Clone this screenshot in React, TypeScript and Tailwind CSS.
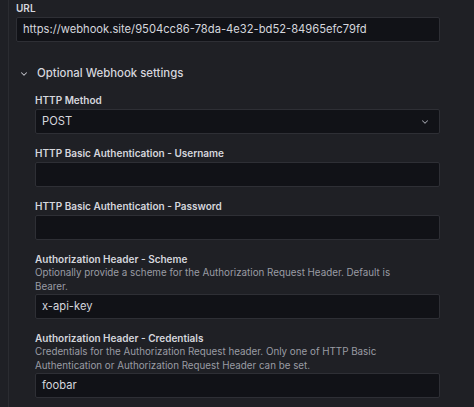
import { ChevronDown } from "lucide-react";

const font = { fontFamily: "Inter, 'Noto Sans', sans-serif" };

function Field({ label, description, value, select }: { label: string; description?: string[]; value?: string; select?: boolean }) {
  return (
    <div className="flex flex-col">
      <div className="h-[14px] leading-[14px] text-[10px] font-semibold text-[#d5d6dd] mb-[2px]">{label}</div>
      {description && (
        <div className="text-[9.8px] leading-[14px] text-[#9a9ca4] -mt-[2px]">
          {description.map((d) => (
            <div key={d}>{d}</div>
          ))}
        </div>
      )}
      <div className="h-[25px] flex items-center justify-between bg-[#111217] border border-[#2e2f35] rounded-[2px] pl-[6px] pr-[7px] text-[11.2px] text-[#d5d6dd]">
        <span>{value}</span>
        {select && <ChevronDown className="w-[10px] h-[10px] text-[#9b9da6] mr-[2px]" strokeWidth={2.5} />}
      </div>
    </div>
  );
}

export default function App() {
  return (
    <div className="w-[474px] h-[407px] bg-[#1f2025] overflow-hidden pl-[8px]" style={font}>
      <div className="h-full border-l border-[#2b2c31] pl-[7px] pt-[1px] pr-[34px]">
        <Field label="URL" value="https://webhook.site/9504cc86-78da-4e32-bd52-84965efc79fd" />
        <div className="mt-[21px] h-[22px] flex items-center gap-[8px] pl-[3px]">
          <ChevronDown className="w-[10px] h-[10px] text-[#c4c5cc]" strokeWidth={2.5} />
          <span className="text-[11.4px] font-medium text-[#d5d6dd]">Optional Webhook settings</span>
        </div>
        <div className="pl-[19px] mt-[8px] flex flex-col gap-[12px]">
          <Field label="HTTP Method" value="POST" select />
          <Field label="HTTP Basic Authentication - Username" />
          <Field label="HTTP Basic Authentication - Password" />
          <Field
            label="Authorization Header - Scheme"
            description={["Optionally provide a scheme for the Authorization Request Header. Default is", "Bearer."]}
            value="x-api-key"
          />
          <Field
            label="Authorization Header - Credentials"
            description={["Credentials for the Authorization Request header. Only one of HTTP Basic", "Authentication or Authorization Request Header can be set."]}
            value="foobar"
          />
        </div>
      </div>
    </div>
  );
}
